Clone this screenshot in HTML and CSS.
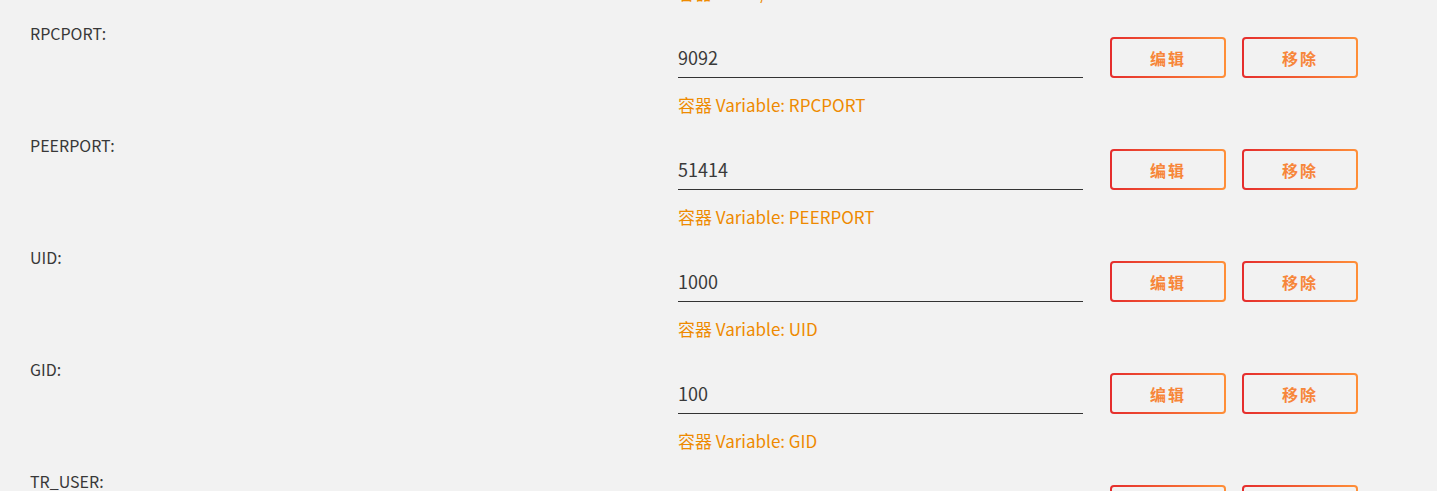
FILE: index.html
```html
<!DOCTYPE html>
<html lang="zh">
<head>
<meta charset="utf-8">
<title>Variables</title>
<link rel="stylesheet" href="styles.css">
</head>
<body>
<div class="list">
  <div class="tail"><div class="spacer"></div><div class="hint">容器 Path: /watch</div></div>

  <div class="row">
    <div class="label">RPCPORT:</div>
    <div class="field">
      <div class="value">9092</div>
      <div class="hint">容器 Variable: RPCPORT</div>
    </div>
    <div class="actions"><button class="btn">编辑</button><button class="btn">移除</button></div>
  </div>

  <div class="row">
    <div class="label">PEERPORT:</div>
    <div class="field">
      <div class="value">51414</div>
      <div class="hint">容器 Variable: PEERPORT</div>
    </div>
    <div class="actions"><button class="btn">编辑</button><button class="btn">移除</button></div>
  </div>

  <div class="row">
    <div class="label">UID:</div>
    <div class="field">
      <div class="value">1000</div>
      <div class="hint">容器 Variable: UID</div>
    </div>
    <div class="actions"><button class="btn">编辑</button><button class="btn">移除</button></div>
  </div>

  <div class="row">
    <div class="label">GID:</div>
    <div class="field">
      <div class="value">100</div>
      <div class="hint">容器 Variable: GID</div>
    </div>
    <div class="actions"><button class="btn">编辑</button><button class="btn">移除</button></div>
  </div>

  <div class="row">
    <div class="label">TR_USER:</div>
    <div class="field">
      <div class="value">admin</div>
      <div class="hint">容器 Variable: TR_USER</div>
    </div>
    <div class="actions"><button class="btn">编辑</button><button class="btn">移除</button></div>
  </div>
</div>
</body>
</html>
```

FILE: styles.css
```css
html, body {
  margin: 0;
  padding: 0;
  background: #f2f2f2;
  overflow: hidden;
}
body {
  font-family: "Noto Sans CJK SC", "Noto Sans", sans-serif;
  color: #333;
}
.list {
  padding-left: 30px;
}
.tail {
  display: grid;
  grid-template-columns: 648px 405px;
  margin-top: -19px;
  padding-bottom: 16px;
}
.row {
  display: grid;
  grid-template-columns: 648px 405px 1fr;
  height: 112px;
}
.label {
  font-size: 16px;
  line-height: 24px;
  color: #383838;
}
.field {
  padding-top: 24px;
}
.value {
  font-size: 18px;
  line-height: 24px;
  padding-bottom: 8px;
  border-bottom: 1px solid #333;
  color: #3a3a3a;
}
.hint {
  font-size: 17px;
  line-height: 24px;
  color: #ee8a00;
}
.field .hint {
  margin-top: 15px;
}
.actions {
  display: flex;
  gap: 16px;
  padding-left: 27px;
  padding-top: 16px;
  align-items: flex-start;
}
.btn {
  width: 116px;
  height: 41px;
  border: 2px solid transparent;
  border-radius: 4px;
  background:
    linear-gradient(#f2f2f2, #f2f2f2) padding-box,
    linear-gradient(90deg, #e52d2d, #ff8f38) border-box;
  font-family: "Noto Sans CJK SC", sans-serif;
  font-size: 16px;
  font-weight: bold;
  letter-spacing: 2px;
  color: #f7863a;
  padding: 0;
}
```
